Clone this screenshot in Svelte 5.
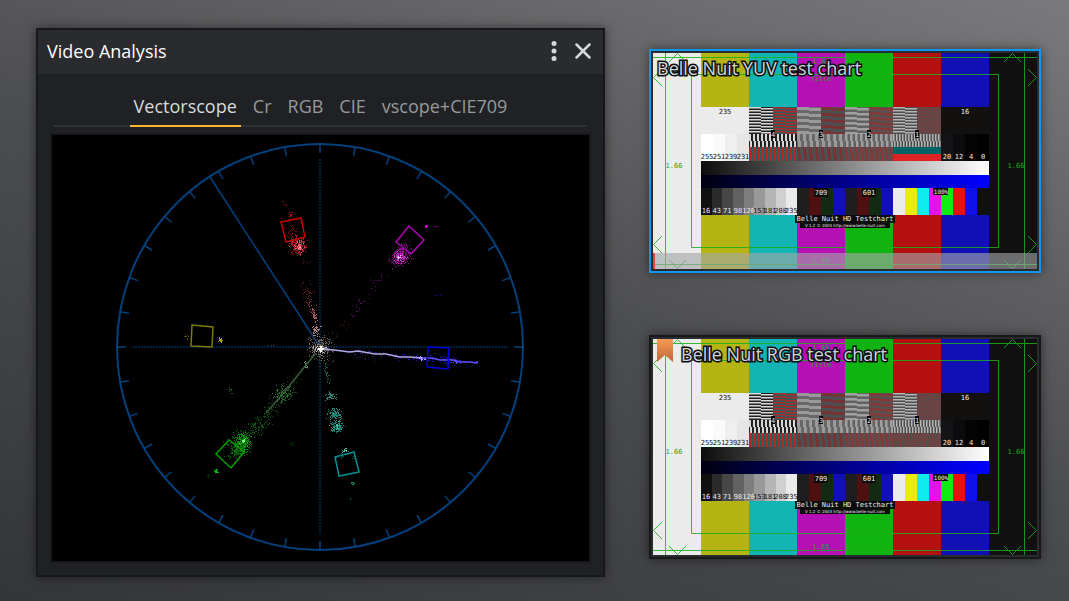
<script lang="ts">
	interface Cluster {
		x: number;
		y: number;
		rx: number;
		ry: number;
		angle: number;
		count: number;
		color: string;
	}

	const tabs = ['Vectorscope', 'Cr', 'RGB', 'CIE', 'vscope+CIE709'];
	let activeTab = $state('Vectorscope');

	const clips = [
		{ id: 'yuv', title: 'Belle Nuit YUV test chart', bookmarked: false, progress: true },
		{ id: 'rgb', title: 'Belle Nuit RGB test chart', bookmarked: true, progress: false }
	];
	let selectedClip = $state('yuv');

	// vectorscope
	const radius = 203;
	const ticks = Array.from({ length: 36 }, (_, i) => i * 10);
	const targets = [
		{ color: '#c80000', points: '-39,-125 -19,-129 -15,-110 -34,-105' },
		{ color: '#7d7800', points: '-128,-22 -107,-20 -108,0 -129,-1' },
		{ color: '#b400b4', points: '89,-121 104,-107 91,-93 76,-105' },
		{ color: '#00a000', points: '-89,121 -104,107 -91,93 -76,105' },
		{ color: '#0000d8', points: '128,22 107,20 108,0 129,1' },
		{ color: '#009090', points: '39,125 19,129 15,110 34,105' }
	];

	const clusters: Cluster[] = [
		// red
		{ x: -27, y: -110, rx: 3, ry: 8, angle: -12, count: 60, color: '#8c0f18' },
		{ x: -22, y: -102, rx: 4, ry: 4, angle: 0, count: 150, color: '#b01a2e' },
		{ x: -21, y: -101, rx: 2, ry: 3, angle: 0, count: 50, color: '#e0606c' },
		{ x: -21, y: -100, rx: 1, ry: 1, angle: 0, count: 8, color: '#ffc8c8' },
		{ x: -30, y: -133, rx: 1, ry: 2, angle: 0, count: 16, color: '#b01020' },
		{ x: -36, y: -142, rx: 1, ry: 4, angle: -35, count: 10, color: '#700810' },
		{ x: -14, y: -86, rx: 3, ry: 1, angle: 0, count: 7, color: '#500a10' },
		{ x: -12, y: -50, rx: 3, ry: 8, angle: -15, count: 60, color: '#5c2026' },
		{ x: -7, y: -35, rx: 1, ry: 5, angle: -15, count: 45, color: '#a05a60' },
		{ x: -4, y: -17, rx: 2, ry: 3, angle: 0, count: 45, color: '#b08484' },
		// magenta
		{ x: 80, y: -91, rx: 5, ry: 4, angle: -40, count: 240, color: '#840a84' },
		{ x: 79, y: -90, rx: 3, ry: 3, angle: 0, count: 80, color: '#c032c0' },
		{ x: 79, y: -90, rx: 1, ry: 1, angle: 0, count: 8, color: '#ffc0ff' },
		{ x: 86, y: -101, rx: 3, ry: 2, angle: 0, count: 22, color: '#780078' },
		{ x: 45, y: -50, rx: 22, ry: 3, angle: -50, count: 46, color: '#5a1060' },
		{ x: 106, y: -121, rx: 1, ry: 1, angle: 0, count: 18, color: '#d000d0' },
		{ x: 114, y: -121, rx: 2, ry: 0, angle: 0, count: 5, color: '#780078' },
		// green
		{ x: -78, y: 95, rx: 4, ry: 5, angle: 0, count: 300, color: '#08780c' },
		{ x: -77, y: 94, rx: 3, ry: 4, angle: 0, count: 90, color: '#18a01c' },
		{ x: -77, y: 93, rx: 1, ry: 1, angle: 0, count: 8, color: '#80ff80' },
		{ x: -84, y: 102, rx: 5, ry: 5, angle: 0, count: 120, color: '#066a08' },
		{ x: -64, y: 80, rx: 9, ry: 4, angle: -45, count: 130, color: '#0b5010' },
		{ x: -38, y: 47, rx: 5, ry: 4, angle: -35, count: 110, color: '#286a2c' },
		{ x: -42, y: 54, rx: 20, ry: 4, angle: -50, count: 120, color: '#183c1a' },
		{ x: -104, y: 124, rx: 1, ry: 1, angle: 0, count: 26, color: '#10b018' },
		{ x: -112, y: 128, rx: 3, ry: 2, angle: 0, count: 5, color: '#075008' },
		{ x: -90, y: 43, rx: 1, ry: 2, angle: 0, count: 8, color: '#246008' },
		{ x: -28, y: 96, rx: 1, ry: 1, angle: 0, count: 5, color: '#06480c' },
		{ x: -14, y: 18, rx: 1, ry: 2, angle: 0, count: 16, color: '#708870' },
		// blue
		{ x: 80, y: 10, rx: 25, ry: 2, angle: 6, count: 65, color: '#24109c' },
		{ x: 122, y: 13, rx: 13, ry: 2, angle: 5, count: 70, color: '#2014c4' },
		{ x: 102, y: 11, rx: 2, ry: 1, angle: 0, count: 26, color: '#b0a0ff' },
		{ x: 134, y: 14, rx: 2, ry: 1, angle: 0, count: 14, color: '#6258ff' },
		{ x: 119, y: -53, rx: 2, ry: 1, angle: 0, count: 4, color: '#1a0ca0' },
		{ x: 42, y: 7, rx: 9, ry: 3, angle: 5, count: 26, color: '#28205c' },
		// cyan
		{ x: 7, y: 27, rx: 1, ry: 5, angle: -12, count: 32, color: '#245450' },
		{ x: 11, y: 49, rx: 3, ry: 2, angle: 0, count: 55, color: '#287c70' },
		{ x: 14, y: 67, rx: 3, ry: 3, angle: 0, count: 100, color: '#208474' },
		{ x: 17, y: 79, rx: 3, ry: 3, angle: 20, count: 120, color: '#1c8474' },
		{ x: 17, y: 79, rx: 1, ry: 2, angle: 0, count: 12, color: '#4cb8a4' },
		{ x: 24, y: 103, rx: 1, ry: 1, angle: 0, count: 14, color: '#50c8b8' },
		{ x: 25, y: 108, rx: 4, ry: 3, angle: 0, count: 14, color: '#106458' },
		{ x: 32, y: 136, rx: 1, ry: 1, angle: 0, count: 14, color: '#108468' },
		{ x: 30, y: 151, rx: 0, ry: 1, angle: 0, count: 4, color: '#0c6048' },
		// yellow
		{ x: -100, y: -8, rx: 1, ry: 2, angle: 0, count: 18, color: '#a8a400' },
		{ x: -134, y: -10, rx: 1, ry: 2, angle: 0, count: 8, color: '#504e00' },
		{ x: -50, y: -2, rx: 2, ry: 0, angle: 0, count: 4, color: '#504e10' },
		// neutral centre
		{ x: 0, y: 1, rx: 6, ry: 7, angle: 0, count: 200, color: '#3a322e' },
		{ x: 0, y: 1, rx: 5, ry: 5, angle: 0, count: 170, color: '#746e6a' },
		{ x: 0, y: 2, rx: 3, ry: 2, angle: 0, count: 30, color: '#c8c8c8' }
	];

	let seed = 7;
	function random() {
		seed = (seed * 16807) % 2147483647;
		return seed / 2147483647;
	}

	function spread() {
		return (random() + random() + random() - 1.5) * 2;
	}

	function scatter(c: Cluster): string {
		const a = (c.angle * Math.PI) / 180;
		let d = '';
		for (let i = 0; i < c.count; i++) {
			const u = spread() * c.rx;
			const v = spread() * c.ry;
			const x = Math.round(c.x + u * Math.cos(a) - v * Math.sin(a));
			const y = Math.round(c.y + u * Math.sin(a) + v * Math.cos(a));
			d += `M${x} ${y}h1v1h-1z`;
		}
		return d;
	}

	const traces = clusters.map((c) => ({ color: c.color, d: scatter(c) }));

	// test chart
	const bars = ['#ebebeb', '#b4b414', '#12b4b4', '#b410b4', '#10b410', '#b41010', '#1010b4', '#101010'];
	const whites = [
		{ value: 255, fill: '#ffffff' },
		{ value: 251, fill: '#fafafa' },
		{ value: 239, fill: '#efefef' },
		{ value: 231, fill: '#e6e6e6' }
	];
	const blacks = [
		{ value: 20, fill: '#141416' },
		{ value: 12, fill: '#0c0c0e' },
		{ value: 4, fill: '#040404' },
		{ value: 0, fill: '#000000' }
	];
	const greys = [16, 43, 71, 98, 126, 153, 181, 208, 235];
	const bursts = [
		{ label: 4, x: 96, row: 3, col: 4, dark: '#202020', light: '#d8d8d8', red: '#b42828', teal: '#2a5e5e' },
		{ label: 3, x: 144, row: 6, col: 6, dark: '#686868', light: '#9a9a9a', red: '#763434', teal: '#4c5050' },
		{ label: 2, x: 192, row: 5, col: 5, dark: '#626262', light: '#a0a0a0', red: '#843838', teal: '#585050' },
		{ label: 1, x: 240, row: 3, col: 3, dark: '#4e4e4e', light: '#b4b4b4', red: '#744040', teal: '#5c4848' }
	];
	const camera = ['#1e1e1e', '#4e1010', '#112a11', '#1010b4'];
	const full = ['#ebebeb', '#ebeb10', '#10ebeb', '#eb10eb', '#10eb10', '#eb1010', '#1010eb', '#101010'];

	function rows(x: number, y: number, w: number, h: number, step: number): string {
		let d = '';
		for (let i = 0; i < h; i += step) {
			d += `M${x} ${y + i}h${w}v${Math.min(step / 2, h - i)}h${-w}z`;
		}
		return d;
	}

	function columns(x: number, y: number, w: number, h: number, step: number): string {
		let d = '';
		for (let i = 0; i < w; i += step) {
			d += `M${x + i} ${y}h${Math.min(step / 2, w - i)}v${h}h${-Math.min(step / 2, w - i)}z`;
		}
		return d;
	}
</script>

{#snippet testChart(id: string)}
	<svg class="chart" viewBox="0 0 384 216" role="img" aria-label="Test chart">
		<defs>
			<linearGradient id="ramp-{id}">
				<stop offset="0" stop-color="#0c0c0c" />
				<stop offset="1" stop-color="#fff" />
			</linearGradient>
			<linearGradient id="blue-{id}">
				<stop offset="0" stop-color="#000010" />
				<stop offset="1" stop-color="#0000ff" />
			</linearGradient>
		</defs>

		<g shape-rendering="crispEdges">
			{#each bars as fill, i}
				<rect x={i * 48} width="48" height="216" {fill} />
			{/each}
			<rect x="48" y="54" width="48" height="27" fill="#ebebeb" />
			<rect x="288" y="54" width="48" height="27" fill="#12110f" />

			{#each whites as cell, i}
				<rect x={48 + i * 12} y="81" width="12" height="27" fill={cell.fill} />
			{/each}
			{#each blacks as cell, i}
				<rect x={288 + i * 12} y="81" width="12" height="27" fill={cell.fill} />
			{/each}
		</g>

		{#each bursts as b}
			<rect x={b.x} y="54" width="48" height="54" fill={b.dark} />
			<path d={rows(b.x, 54, 12, 27, b.row)} fill={b.light} />
			<path d={rows(b.x + 12, 55, 12, 26, b.row)} fill={b.light} />
			<rect x={b.x + 24} y="54" width="24" height="27" fill={b.teal} />
			<path d={rows(b.x + 24, 54, 12, 27, b.row)} fill={b.red} />
			<path d={rows(b.x + 36, 55, 12, 26, b.row)} fill={b.red} />
			<path d={columns(b.x, 81, 48, 7, b.col)} fill={b.light} />
			<path d={columns(b.x + 1, 88, 47, 6, b.col)} fill={b.light} />
			{#if b.label === 1 && id === 'yuv'}
				<rect x={b.x} y="94" width="48" height="7" fill="#006464" />
				<rect x={b.x} y="101" width="48" height="7" fill="#dc2424" />
			{:else}
				<rect x={b.x} y="94" width="48" height="14" fill={b.teal} />
				<path d={columns(b.x, 94, 48, 7, b.col)} fill={b.red} />
				<path d={columns(b.x + 1, 101, 47, 7, b.col)} fill={b.red} />
			{/if}
			<rect x={b.x + 22} y="77" width="4" height="8" fill="#000" />
		{/each}

		<g shape-rendering="crispEdges">
			<rect x="48" y="108" width="288" height="14" fill="url(#ramp-{id})" />
			<rect x="48" y="122" width="288" height="13" fill="url(#blue-{id})" />

			{#each greys as g, i}
				<rect x={48 + (i * 96) / 9} y="135" width="11" height="27" fill="rgb({g},{g},{g})" />
			{/each}
			{#each [...camera, ...camera] as fill, i}
				<rect x={144 + i * 12} y="135" width="12" height="27" {fill} />
			{/each}
			{#each full as fill, i}
				<rect x={240 + i * 12} y="135" width="12" height="27" {fill} />
			{/each}
		</g>

		<g class="guides">
			<path d="M0 4.5H384M0 211.5H384M12.5 0V216M371.5 0V216M38.5 21.5H345.5V194.5H38.5Z" />
			<path
				d="M16 9L24.5 .5L33 9M351 9L359.5 .5L368 9M16 207L24.5 215.5L33 207M351 207L359.5 215.5L368 207
				M9 16L.5 24.5L9 33M9 183L.5 191.5L9 200M375 16L383.5 24.5L375 33M375 183L383.5 191.5L375 200"
			/>
		</g>

		<!-- plates behind the labels -->
		<g class="plates" shape-rendering="crispEdges">
			<rect x="161" y="135" width="14" height="9" />
			<rect x="209" y="135" width="14" height="9" />
			<rect x="280" y="135" width="15" height="7" />
			<rect x="142" y="162" width="100" height="8" />
			<rect x="147" y="170" width="90" height="5" />
		</g>

		<g class="labels">
			<text x="72" y="61" class="dark">235</text>
			<text x="312" y="61">16</text>
			{#each whites as cell, i}
				<text x={54 + i * 12} y="106" class="dark">{cell.value}</text>
			{/each}
			{#each blacks as cell, i}
				<text x={294 + i * 12} y="106">{cell.value}</text>
			{/each}
			{#each bursts as b}
				<text x={b.x + 24} y="84">{b.label}</text>
			{/each}
			{#each greys as g, i}
				<text x={53 + (i * 96) / 9} y="160" class:dark={g > 130}>{g}</text>
			{/each}
			<text x="168" y="142">709</text>
			<text x="216" y="142">601</text>
			<text x="288" y="141" class="small">100%</text>
			<text x="192" y="168">Belle Nuit HD Testchart</text>
			<text x="192" y="174" class="tiny">V 1.2 © 2003 http://www.belle-nuit.com</text>
			<g class="green">
				<text x="168" y="11">1.85</text>
				<text x="168" y="28">Title</text>
				<text x="168" y="210">1.85</text>
				<text x="21" y="115">1.66</text>
				<text x="363" y="115">1.66</text>
			</g>
		</g>
	</svg>
{/snippet}

<main>
	<section class="panel">
		<header>
			<h1>Video Analysis</h1>
			<button class="icon-button" aria-label="Menu">
				<svg width="6" height="20" viewBox="0 0 6 20">
					<circle cx="3" cy="2.5" r="2.5" />
					<circle cx="3" cy="10" r="2.5" />
					<circle cx="3" cy="17.5" r="2.5" />
				</svg>
			</button>
			<button class="icon-button" aria-label="Close">
				<svg width="16" height="16" viewBox="0 0 16 16">
					<path d="M1.5 1.5L14.5 14.5M14.5 1.5L1.5 14.5" />
				</svg>
			</button>
		</header>

		<div class="panel-body">
			<div class="tabs" role="tablist">
				{#each tabs as tab}
					<button
						class="tab"
						class:active={tab === activeTab}
						role="tab"
						aria-selected={tab === activeTab}
						onclick={() => (activeTab = tab)}
					>
						{tab}
					</button>
				{/each}
			</div>

			<div class="scope">
				<svg viewBox="-268 -212 537 426" role="img" aria-label={activeTab}>
					<g class="graticule">
						<circle r={radius} />
						{#each ticks as angle}
							<line class="tick" y1={-radius} y2={-194} transform="rotate({angle})" />
						{/each}
						<line class="tick" x2="-110" y2="-170" />
						<path class="axis" d="M-188 0H188M0 -188V188" />
					</g>
					<g shape-rendering="crispEdges">
						{#each traces as trace}
							<path d={trace.d} fill={trace.color} />
						{/each}
					</g>
					<path class="trace" d="M4 2L14 3L30 5L38 4L55 7L66 7L80 10L90 10L102 11" stroke="#b4a8e8" />
					<path class="trace" d="M102 11L112 11L120 13L134 13L140 15L150 15L157 16V14" stroke="#6050ff" />
					<path class="trace" d="M-4 6L-14 18L-34 43L-54 66" stroke="#385e38" />
					{#each targets as target}
						<polygon class="target" points={target.points} stroke={target.color} />
					{/each}
					<path class="cross" d="M1 -1V5M-2 2H4" />
				</svg>
			</div>
		</div>
	</section>

	<div class="clips">
		{#each clips as clip (clip.id)}
			<button
				class="clip"
				class:selected={clip.id === selectedClip}
				aria-pressed={clip.id === selectedClip}
				onclick={() => (selectedClip = clip.id)}
			>
				<span class="frame">
					{@render testChart(clip.id)}
					<span class="caption">
						{#if clip.bookmarked}
							<svg class="bookmark" width="16" height="23" viewBox="0 0 16 23">
								<defs>
									<linearGradient id="ribbon" x2="0" y2="1">
										<stop offset="0" stop-color="#fb9a55" />
										<stop offset="1" stop-color="#b9693a" />
									</linearGradient>
								</defs>
								<path d="M0 0H16V23L8 16L0 23Z" fill="url(#ribbon)" />
							</svg>
						{/if}
						<span class="clip-title">{clip.title}</span>
					</span>
					{#if clip.progress}
						<span class="progress"></span>
					{/if}
				</span>
			</button>
		{/each}
	</div>
</main>

<style>
	:global(body) {
		margin: 0;
		background: #4c4d4f;
	}

	main {
		min-height: 100vh;
		box-sizing: border-box;
		padding: 28px 28px 24px 36px;
		display: grid;
		grid-template-columns: 569fr 392fr;
		gap: 44px;
		align-items: start;
		font-family: 'Open Sans', 'Noto Sans', sans-serif;
		background: linear-gradient(20deg, #343537 0%, #4c4d4f 50%, #7a7a7c 100%);
	}

	button {
		margin: 0;
		padding: 0;
		border: none;
		background: none;
		font: inherit;
		color: inherit;
		cursor: pointer;
	}

	svg {
		display: block;
	}

	.panel {
		border: 2px solid #17181a;
		background: #202124;
		box-shadow: 0 0 10px rgba(0, 0, 0, 0.5);
	}

	header {
		height: 44px;
		box-sizing: border-box;
		padding: 0 12px 2px 9px;
		display: flex;
		align-items: center;
		gap: 18px;
		background: #2a2b2e;
	}

	h1 {
		flex: 1;
		margin: 0;
		font-size: 18px;
		font-weight: 400;
		color: #fcfcfc;
	}

	.icon-button svg {
		fill: #d3dadd;
		stroke: none;
	}

	.icon-button path {
		stroke: #d3dadd;
		stroke-width: 2.5;
		stroke-linecap: round;
	}

	.panel-body {
		padding: 12px;
	}

	.tabs {
		display: flex;
		justify-content: center;
		gap: 8px;
		margin: 0 4px 6px;
		box-shadow: inset 0 -2px #303134;
	}

	.tab {
		padding: 7px 4px 6px;
		border-bottom: 2px solid transparent;
		font-size: 18px;
		line-height: 26px;
		color: #97999b;
	}

	.tab.active {
		border-color: #fdb32a;
		color: #d6dadc;
	}

	.scope {
		border: 2px solid #18191b;
		background: #000;
	}

	.graticule {
		fill: none;
		stroke: #04407c;
	}

	.graticule circle {
		stroke-width: 2;
	}

	.tick {
		stroke-width: 1.5;
	}

	.axis {
		stroke: #032c58;
		stroke-width: 1.5;
		stroke-dasharray: 2 1;
	}

	.trace,
	.target {
		fill: none;
		stroke-width: 1.5;
	}

	.cross {
		stroke: #fff;
		stroke-width: 2;
	}

	.clips {
		padding-top: 21px;
		display: flex;
		flex-direction: column;
		gap: 62px;
	}

	.clip {
		padding: 2px;
		border: 2px solid #17181a;
		background: #2a2b2e;
		box-shadow: 0 0 10px rgba(0, 0, 0, 0.5);
	}

	.clip.selected {
		border-color: #0f96ee;
	}

	.frame {
		display: block;
		position: relative;
	}

	.caption {
		position: absolute;
		top: 0;
		left: 4px;
		right: 4px;
		display: flex;
		gap: 8px;
	}

	.clip-title {
		font-size: 18px;
		line-height: 30px;
		color: #ccd6da;
		-webkit-text-stroke: 3px #0c0c10;
		paint-order: stroke fill;
		white-space: nowrap;
	}

	.progress {
		position: absolute;
		left: 0;
		right: 0;
		bottom: 0;
		height: 16px;
		box-sizing: border-box;
		border-left: 2px solid #e04848;
		background: rgba(164, 166, 168, 0.62);
	}

	.guides {
		fill: none;
		stroke: #18b018;
		stroke-width: 1;
		opacity: 0.85;
	}

	.plates {
		fill: #0c0c0c;
	}

	.labels {
		font-family: 'DejaVu Sans Mono', monospace;
		font-size: 7px;
		text-anchor: middle;
		fill: #ececec;
	}

	.labels .dark {
		fill: #101010;
	}

	.labels .green {
		fill: #18a818;
	}

	.labels .small {
		font-size: 6px;
	}

	.labels .tiny {
		font-family: 'DejaVu Sans', sans-serif;
		font-size: 4px;
	}
</style>
